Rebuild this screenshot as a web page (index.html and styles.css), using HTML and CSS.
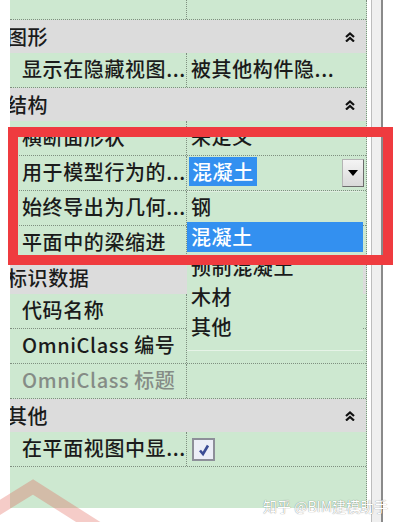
FILE: index.html
```html
<!DOCTYPE html>
<html lang="zh-CN">
<head>
    <meta charset="UTF-8">
    <title>属性</title>
    <link rel="stylesheet" href="styles.css">
</head>
<body>
    <div class="window">
        <!-- 属性面板 -->
        <div class="props">
            <div class="row cut">
                <div class="name">结构材质</div>
                <div class="value"></div>
            </div>
            <div class="group">
                <span>图形</span>
                <svg class="fold" viewBox="0 0 10 10"><polyline points="1,5 5,1.5 9,5"/><polyline points="1,9.5 5,6 9,9.5"/></svg>
            </div>
            <div class="row">
                <div class="name">显示在隐藏视图...</div>
                <div class="value">被其他构件隐...</div>
            </div>
            <div class="group">
                <span>结构</span>
                <svg class="fold" viewBox="0 0 10 10"><polyline points="1,5 5,1.5 9,5"/><polyline points="1,9.5 5,6 9,9.5"/></svg>
            </div>
            <div class="row">
                <div class="name">横断面形状</div>
                <div class="value">未定义</div>
            </div>
            <div class="row">
                <div class="name">用于模型行为的...</div>
                <div class="value select">
                    <span class="picked">混凝土</span>
                    <span class="drop-btn">
                        <svg viewBox="0 0 10 6"><polygon points="0,0 10,0 5,6"/></svg>
                    </span>
                    <!-- 下拉列表 -->
                    <ul class="drop-list">
                        <li>钢</li>
                        <li class="on">混凝土</li>
                        <li>预制混凝土</li>
                        <li>木材</li>
                        <li>其他</li>
                    </ul>
                </div>
            </div>
            <div class="row">
                <div class="name">始终导出为几何...</div>
                <div class="value"></div>
            </div>
            <div class="row">
                <div class="name">平面中的梁缩进</div>
                <div class="value"></div>
            </div>
            <div class="group">
                <span>标识数据</span>
            </div>
            <div class="row">
                <div class="name">代码名称</div>
                <div class="value"></div>
            </div>
            <div class="row">
                <div class="name">OmniClass 编号</div>
                <div class="value"></div>
            </div>
            <div class="row">
                <div class="name dim">OmniClass 标题</div>
                <div class="value"></div>
            </div>
            <div class="group">
                <span>其他</span>
                <svg class="fold" viewBox="0 0 10 10"><polyline points="1,5 5,1.5 9,5"/><polyline points="1,9.5 5,6 9,9.5"/></svg>
            </div>
            <div class="row">
                <div class="name">在平面视图中显...</div>
                <div class="value">
                    <span class="check">
                        <svg viewBox="0 0 14 14"><polyline points="3,7.5 6,11 11,2.5"/></svg>
                    </span>
                </div>
            </div>
        </div>
        <div class="edge"></div>
    </div>

    <!-- 标注框和水印 -->
    <div class="mark-box"></div>
    <svg class="logo" viewBox="0 0 110 60"><polyline points="-6,41 33,17 104,62"/></svg>
    <div class="credit">知乎 @BIM建模助手</div>
</body>
</html>
```

FILE: styles.css
```css
body {
    margin: 0;
    width: 397px;
    height: 522px;
    overflow: hidden;
    position: relative;
    background-color: #ffffff;
    font-family: "Noto Sans CJK SC", "Noto Sans", sans-serif;
    font-size: 20px;
    font-weight: 500;
    letter-spacing: 0.6px;
    color: #1b1b1b;
}
.window {
    display: flex;
    padding-left: 10px;
    height: 508px;
}
.props {
    width: 357px;
    height: 508px;
    overflow: hidden;
    background-color: #cde8d0; /* 浅绿底色 */
    border-right: 1px dotted #7f8f80;
    box-sizing: border-box;
}
.row {
    display: grid;
    grid-template-columns: 177px 1fr;
    height: 35px;
    border-bottom: 1px dotted #7f8f80;
    box-sizing: border-box;
}
.row.cut {
    margin-top: -15px;
}
.row.cut .name {
    padding-left: 30px;
    line-height: 10px;
}
.name {
    padding-left: 12px;
    border-right: 1px dotted #7f8f80;
    line-height: 32px;
    white-space: nowrap;
    overflow: hidden;
}
.name.dim {
    color: #858c86;
}
.value {
    position: relative;
    padding-left: 4px;
    line-height: 32px;
    white-space: nowrap;
}
.group {
    display: flex;
    justify-content: space-between;
    align-items: center;
    height: 33px;
    padding-right: 11px;
    background-color: #dcdcdc;
    text-indent: -3px;
    white-space: nowrap;
}
.fold {
    width: 10px;
    height: 10px;
    fill: none;
    stroke: #111111;
    stroke-width: 2.2;
}

/* 下拉框 */
.select {
    display: flex;
    align-items: flex-start;
    justify-content: space-between;
    padding-left: 2px;
    padding-right: 2px;
}
.picked {
    margin-top: 1px;
    padding: 0 3px;
    height: 29px;
    line-height: 29px;
    background-color: #3390f0;
    color: #ffffff;
}
.drop-btn {
    display: flex;
    align-items: center;
    justify-content: center;
    margin-top: 3px;
    width: 22px;
    height: 28px;
    box-sizing: border-box;
    background: linear-gradient(#f4f4f4, #d9d9d9);
    border: 1px solid #b4b4b4;
    border-right-color: #6c6c6c;
    border-bottom-color: #6c6c6c;
}
.drop-btn svg {
    width: 10px;
    height: 6px;
    fill: #000000;
}
.drop-list {
    position: absolute;
    top: 35px;
    left: 0;
    width: 176px;
    margin: 0;
    padding: 0 0 8px;
    list-style: none;
    background-color: #cde8d0;
    border-top: 1px solid #dfeee0;
    border-bottom: 1px solid #e6f3e7;
    z-index: 5;
}
.drop-list li {
    height: 30px;
    line-height: 30px;
    padding-left: 4px;
}
.drop-list li.on {
    background-color: #3390f0;
    color: #ffffff;
}

/* 复选框 */
.check {
    display: inline-flex;
    align-items: center;
    justify-content: center;
    margin-top: 6px;
    margin-left: 1px;
    width: 23px;
    height: 23px;
    box-sizing: border-box;
    border: 2px solid #8d8f99;
    background-color: #eceef7;
    vertical-align: top;
}
.check svg {
    width: 14px;
    height: 14px;
    fill: none;
    stroke: #3b4c94;
    stroke-width: 2.6;
}

/* 右侧窗口边 */
.edge {
    width: 9px;
    margin-left: 4px;
    background-color: #efefef;
    border-left: 1px solid #bdbdbd;
    border-right: 2px solid #8a8a8a;
    height: 522px;
}

.mark-box {
    position: absolute;
    left: 8px;
    top: 127px;
    width: 385px;
    height: 138px;
    box-sizing: border-box;
    border: 10px solid #ef3b3f;
    z-index: 10;
}
.logo {
    position: absolute;
    left: 0;
    top: 470px;
    width: 110px;
    height: 60px;
    fill: none;
    stroke: rgba(225, 95, 85, 0.32);
    stroke-width: 13;
    z-index: 8;
}
.credit {
    position: absolute;
    left: 263px;
    top: 496px;
    font-size: 14px;
    font-weight: 400;
    letter-spacing: 0;
    color: #ffffff;
    text-shadow: 0 0 1px rgba(0, 0, 0, 0.6);
    white-space: nowrap;
    z-index: 9;
}
```
